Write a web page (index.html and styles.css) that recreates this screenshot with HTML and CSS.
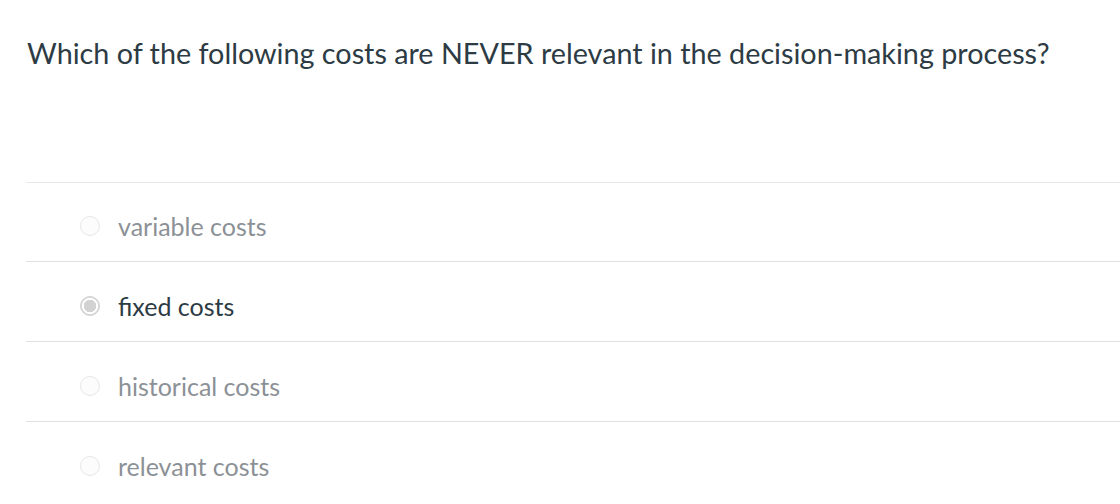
FILE: index.html
```html
<!DOCTYPE html>
<html>
<head>
<meta charset="utf-8">
<link rel="stylesheet" href="styles.css">
</head>
<body>
<div class="quiz">
  <h1 class="question">Which of the following costs are NEVER relevant in the decision-making process?</h1>
  <ul class="answers">
    <li class="answer"><span class="radio"></span><span class="label">variable costs</span></li>
    <li class="answer selected"><span class="radio"></span><span class="label">fixed costs</span></li>
    <li class="answer"><span class="radio"></span><span class="label">historical costs</span></li>
    <li class="answer"><span class="radio"></span><span class="label">relevant costs</span></li>
  </ul>
</div>
</body>
</html>
```
FILE: styles.css
```css
html, body {
  margin: 0;
  padding: 0;
  background: #ffffff;
}
body {
  font-family: Lato, "Open Sans", sans-serif;
}
.quiz {
  padding: 0 0 0 26px;
}
.question {
  margin: 0;
  padding: 35px 0 0 1px;
  font-size: 28.75px;
  font-weight: 400;
  line-height: 36px;
  color: #2d3b45;
}
.answers {
  list-style: none;
  margin: 0;
  padding: 0;
  margin-top: 111px;
  border-top: 1px solid #e8e8e8;
}
.answer {
  height: 79px;
  box-sizing: border-box;
  border-bottom: 1px solid #e0e0e0;
  display: flex;
  align-items: center;
  padding: 8px 0 0 54px;
}
.answer + .answer {
  height: 80px;
}
.answer:last-child {
  border-bottom: none;
}
.radio {
  width: 18px;
  height: 18px;
  border: 1px solid #e6e6e6;
  border-radius: 50%;
  background: #fcfcfc;
  box-sizing: content-box;
  margin-right: 18px;
  flex: none;
}
.selected .radio {
  border: 1px solid #d0d0d0;
  background: radial-gradient(circle, #d2d2d2 0, #d2d2d2 6px, #ffffff 6.5px, #ffffff 7.5px, #dcdcdc 8.5px);
}
.label {
  font-size: 25px;
  color: #8b9196;
  line-height: 30px;
}
.selected .label {
  color: #2d3b45;
}
```
